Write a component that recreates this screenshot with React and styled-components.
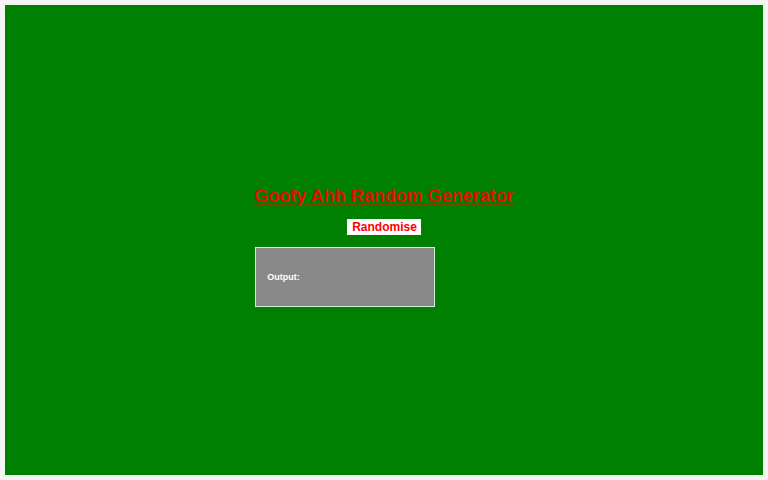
import React from "react";
import styled, { createGlobalStyle } from "styled-components";

const GlobalStyle = createGlobalStyle`
  body {
    margin: 5px;
    background: #f4f4f4;
    font-family: "Liberation Sans", Arial, sans-serif;
  }
`;

const Page = styled.div`
  align-items: center;
  background: #008000;
  display: flex;
  height: 470px;
  justify-content: center;
  width: 758px;
`;

const Wrapper = styled.div`
  display: flex;
  flex-direction: column;
  margin-top: 12px;
`;

const Title = styled.h1`
  color: #e01000;
  font-size: 18px;
  font-weight: 700;
  margin: 0 0 12px;
  text-align: center;
  text-decoration: underline;
  text-decoration-color: rgba(200, 30, 0, 0.6);
  text-decoration-thickness: 2px;
  text-underline-offset: 2px;
`;

const Button = styled.button`
  align-self: center;
  background: #ffffff;
  border: none;
  color: #ff0000;
  font-family: "Liberation Sans", Arial, sans-serif;
  font-size: 12px;
  font-weight: 700;
  height: 16px;
  line-height: 16px;
  margin-bottom: 12px;
  padding: 0 4px 0 5px;
`;

const Output = styled.div`
  align-items: center;
  background: #888888;
  border: 1px solid #d8f0d8;
  box-sizing: border-box;
  color: #ffffff;
  display: flex;
  font-size: 9px;
  font-weight: 700;
  height: 60px;
  margin-left: 1px;
  padding: 0 11px;
  width: 180px;
`;

const App = () => {
  return (
    <>
      <GlobalStyle />
      <Page>
        <Wrapper>
          <Title>Goofy Ahh Random Generator</Title>
          <Button>Randomise</Button>
          <Output>Output:</Output>
        </Wrapper>
      </Page>
    </>
  );
};

export default App;
